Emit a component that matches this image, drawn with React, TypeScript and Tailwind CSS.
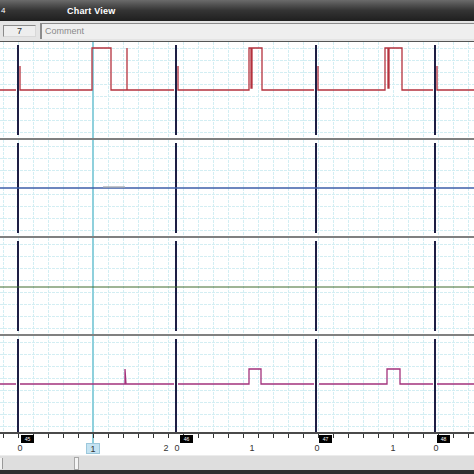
import React from "react";

const GRID_X = Array.from({ length: 32 }, (_, i) => 3 + i * 15);
const GRID_Y = Array.from({ length: 8 }, (_, i) => 6 + i * 12);
const MARKERS = [18, 176, 316, 435];

type Trace = { d: string; color: string; width?: number };

const panels: Trace[][] = [
  [
    {
      color: "#b4323e",
      d: "M0 48 H16 M20 24 V48 H92 V6 H111 V48 H127 V6 M127 48 H174 M178 24 V48 H249 V6 H251 V46 H252 V6 H262 V48 H314 M318 24 V48 H385 V6 H388 V46 H389 V6 H402 V48 H433 M437 24 V48 H474",
    },
  ],
  [
    { color: "#3d5ea8", d: "M0 48 H474" },
    { color: "#a4a9b0", d: "M103 47 H125" },
  ],
  [{ color: "#3f6a2c", d: "M0 49 H474", width: 1 }],
  [
    {
      color: "#a3327c",
      d: "M0 48 H16 M20 48 H125 V33 L126 48 H174 M178 48 H249 V33 H261 V48 H314 M319 48 H387 V33 H400 V48 H433 M437 48 H474",
    },
  ],
];

function Panel({ traces, last }: { traces: Trace[]; last?: boolean }) {
  return (
    <div className="flex flex-col shrink-0">
      <svg width={474} height={96} className="block bg-white">
        {GRID_X.map((x) => (
          <line key={"x" + x} x1={x + 0.5} y1={0} x2={x + 0.5} y2={96} stroke="#d3eef3" strokeDasharray="3 1" />
        ))}
        {GRID_Y.map((y) => (
          <line key={"y" + y} x1={0} y1={y + 0.5} x2={474} y2={y + 0.5} stroke="#d3eef3" strokeDasharray="3 1" />
        ))}
        <line x1={93} y1={0} x2={93} y2={96} stroke="#8fd0dc" strokeWidth={2} />
        {MARKERS.map((x) => (
          <line key={"m" + x} x1={x} y1={3} x2={x} y2={last ? 96 : 93} stroke="#1e1e44" strokeWidth={2} />
        ))}
        {traces.map((t, i) => (
          <path key={i} d={t.d} fill="none" stroke={t.color} strokeWidth={t.width ?? 1.3} />
        ))}
      </svg>
      <div className={last ? "h-[2px] bg-[#4a4a4a]" : "h-[2px] bg-[#808080]"} />
    </div>
  );
}

const tags = [
  { x: 21, label: "45" },
  { x: 180, label: "46" },
  { x: 319, label: "47" },
  { x: 437, label: "48" },
];

const digits = [
  { x: 20, t: "0" },
  { x: 166, t: "2" },
  { x: 177, t: "0" },
  { x: 252, t: "1" },
  { x: 317, t: "0" },
  { x: 393, t: "1" },
  { x: 436, t: "0" },
];

export default function App() {
  return (
    <div className="w-[474px] h-[474px] overflow-hidden flex flex-col bg-white font-['Liberation_Sans',Arial,sans-serif]">
      {/* Title bar */}
      <div className="h-[21px] shrink-0 relative flex items-center bg-gradient-to-b from-[#6b6b6b] via-[#343434] to-[#1f1f1f]">
        <span className="text-[8px] text-white leading-none pl-[1px]">4</span>
        <span className="absolute left-[67px] top-[7px] text-[9px] font-bold text-white leading-none tracking-[0.2px]">
          Chart View
        </span>
      </div>

      {/* Toolbar */}
      <div className="h-[20px] shrink-0 flex items-center gap-[4px] pl-[3px] bg-[#e4e4e4]">
        <div className="w-[33px] h-[12px] border border-t-[#8a8a8a] border-l-[#8a8a8a] border-r-[#d8d8d8] border-b-[#d8d8d8] bg-[#eeeeee] flex items-center justify-center text-[9px] text-[#333] leading-none">
          7
        </div>
        <div className="flex-1 h-[16px] border-l-2 border-t border-[#8c8c8c] border-b-0 border-r-0 bg-[#efefef] flex items-center pl-[3px] text-[9px] text-[#8a8a8a] leading-none">
          Comment
        </div>
      </div>
      <div className="h-[1px] shrink-0 bg-[#555]" />

      {/* Chart panels */}
      {panels.map((traces, i) => (
        <Panel key={i} traces={traces} last={i === panels.length - 1} />
      ))}

      {/* Time axis */}
      <div className="h-[21px] shrink-0 relative bg-white">
        <svg width={474} height={21} className="block absolute left-0 top-0">
          <line x1={93} y1={0} x2={93} y2={9} stroke="#8fd0dc" strokeWidth={2} />
          {GRID_X.map((x) => (
            <line key={x} x1={x + 0.5} y1={0} x2={x + 0.5} y2={4} stroke="#333" />
          ))}
        </svg>
        {tags.map((t) => (
          <span
            key={t.label}
            className="absolute top-[1px] w-[13px] h-[8px] bg-black text-white text-[5px] leading-[8px] text-center"
            style={{ left: t.x }}
          >
            {t.label}
          </span>
        ))}
        <span className="absolute left-[86px] top-[9px] w-[14px] h-[11px] bg-[#c4e3f2] border border-[#9cc8dc] text-[9px] leading-[10px] text-center text-[#333]">
          1
        </span>
        {digits.map((d) => (
          <span
            key={d.x}
            className="absolute top-[10px] text-[9px] leading-none text-[#333] -translate-x-1/2"
            style={{ left: d.x }}
          >
            {d.t}
          </span>
        ))}
      </div>

      {/* Scrollbar */}
      <div className="h-[15px] shrink-0 relative bg-[#dedede] border-t border-[#ececec]">
        <div className="absolute left-0 top-[2px] w-[3px] h-[11px] bg-[#f2f2f2] border-r border-[#999]" />
        <div className="absolute left-[74px] top-[1px] w-[5px] h-[13px] bg-[#f4f4f4] border border-[#a8a8a8]" />
      </div>
      <div className="flex-1 bg-[#2e2e2e]" />
    </div>
  );
}
